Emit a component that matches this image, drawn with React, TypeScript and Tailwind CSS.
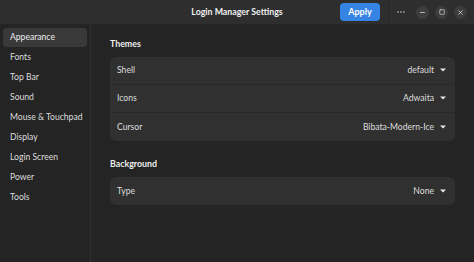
import { Minus, Square, X } from 'lucide-react';

const PAGES = ['Appearance', 'Fonts', 'Top Bar', 'Sound', 'Mouse & Touchpad', 'Display', 'Login Screen', 'Power', 'Tools'];

const THEMES = [
  { label: 'Shell', value: 'default' },
  { label: 'Icons', value: 'Adwaita' },
  { label: 'Cursor', value: 'Bibata-Modern-Ice' },
];

function Caret() {
  return (
    <svg width="6" height="4" viewBox="0 0 6 4" className="ml-[6px]">
      <path d="M0 0.5h6L3 3.5z" fill="#e8e8e8" />
    </svg>
  );
}

function Row({ label, value, last }: { label: string; value: string; last?: boolean }) {
  return (
    <div className={`flex h-[28px] items-center justify-between pl-[7px] pr-[9px] ${last ? '' : 'border-b border-[#292929]'}`}>
      <span className="text-[#dedede]">{label}</span>
      <div className="flex items-center">
        <span className="text-[#dedede]">{value}</span>
        <Caret />
      </div>
    </div>
  );
}

function WinButton({ children }: { children: React.ReactNode }) {
  return (
    <div className="flex h-[13px] w-[13px] items-center justify-center rounded-full bg-[#3d3d3d] text-[#e6e6e6]">
      {children}
    </div>
  );
}

export default function App() {
  return (
    <div
      className="flex h-[262px] w-[474px] flex-col overflow-hidden bg-[#242424] text-[8.6px] text-[#dedede]"
      style={{ fontFamily: 'Lato, "Noto Sans", sans-serif' }}
    >
      <div className="relative flex h-[24px] shrink-0 items-center justify-center bg-[#2e2e2e]">
        <div className="text-[8.8px] font-bold text-[#f0f0f0]">Login Manager Settings</div>
        <div className="absolute right-0 top-0 flex h-full items-center">
          <button className="h-[18px] w-[40px] rounded-[4px] bg-[#3584e4] text-[9px] font-bold text-white">Apply</button>
          <div className="ml-[8px] h-[24px] w-px bg-[#262626]" />
          <svg width="8" height="2" viewBox="0 0 8 2" className="ml-[8px]">
            <circle cx="1" cy="1" r="0.8" fill="#cfcfcf" />
            <circle cx="4" cy="1" r="0.8" fill="#cfcfcf" />
            <circle cx="7" cy="1" r="0.8" fill="#cfcfcf" />
          </svg>
          <div className="ml-[11px] mr-[7px] flex gap-[6px]">
            <WinButton><Minus size={7} strokeWidth={2.5} /></WinButton>
            <WinButton><Square size={6} strokeWidth={2.5} /></WinButton>
            <WinButton><X size={7} strokeWidth={2.5} /></WinButton>
          </div>
        </div>
      </div>
      <div className="flex min-h-0 flex-1">
        <div className="flex w-[91px] shrink-0 flex-col gap-[1px] border-r border-[#303030] px-[3px] pt-[4px]">
          {PAGES.map((p, i) => (
            <div
              key={p}
              className={`flex h-[19px] items-center whitespace-nowrap rounded-[4px] px-[7px] ${i === 0 ? 'bg-[#393939] text-[#ececec]' : 'text-[#dcdcdc]'}`}
            >
              {p}
            </div>
          ))}
        </div>
        <div className="flex flex-1 flex-col px-[19px] pt-[14px]">
          <div className="mb-[7px] text-[8.8px] font-bold leading-[12px] text-[#eeeeee]">Themes</div>
          <div className="rounded-[6px] bg-[#303030]">
            {THEMES.map((t, i) => (
              <Row key={t.label} label={t.label} value={t.value} last={i === THEMES.length - 1} />
            ))}
          </div>
          <div className="mb-[7px] mt-[17px] text-[8.8px] font-bold leading-[12px] text-[#eeeeee]">Background</div>
          <div className="rounded-[6px] bg-[#303030]">
            <Row label="Type" value="None" last />
          </div>
        </div>
      </div>
    </div>
  );
}
